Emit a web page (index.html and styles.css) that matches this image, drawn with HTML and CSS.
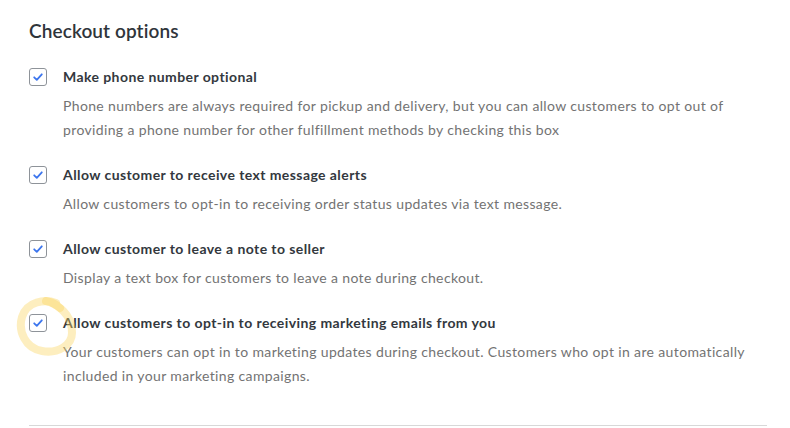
FILE: index.html
```html
<!DOCTYPE html>
<html lang="en">

<head>
    <meta charset="UTF-8">
    <meta name="viewport" content="width=device-width, initial-scale=1.0">
    <title>Checkout options</title>
    <link rel="stylesheet" href="styles.css">
</head>

<body>
    <div class="section">
        <h2 class="title">Checkout options</h2>

        <div class="options">
            <div class="option">
                <span class="checkbox">
                    <svg viewBox="0 0 18 18" width="18" height="18"><path d="M5.2 9.3 L7.8 11.8 L12.8 6.3" /></svg>
                </span>
                <div class="option-body">
                    <div class="option-label">Make phone number optional</div>
                    <p class="option-desc">Phone numbers are always required for pickup and delivery, but you can allow customers to opt out of providing a phone number for other fulfillment methods by checking this box</p>
                </div>
            </div>

            <div class="option">
                <span class="checkbox">
                    <svg viewBox="0 0 18 18" width="18" height="18"><path d="M5.2 9.3 L7.8 11.8 L12.8 6.3" /></svg>
                </span>
                <div class="option-body">
                    <div class="option-label">Allow customer to receive text message alerts</div>
                    <p class="option-desc">Allow customers to opt-in to receiving order status updates via text message.</p>
                </div>
            </div>

            <div class="option">
                <span class="checkbox">
                    <svg viewBox="0 0 18 18" width="18" height="18"><path d="M5.2 9.3 L7.8 11.8 L12.8 6.3" /></svg>
                </span>
                <div class="option-body">
                    <div class="option-label">Allow customer to leave a note to seller</div>
                    <p class="option-desc">Display a text box for customers to leave a note during checkout.</p>
                </div>
            </div>

            <div class="option">
                <span class="checkbox">
                    <svg viewBox="0 0 18 18" width="18" height="18"><path d="M5.2 9.3 L7.8 11.8 L12.8 6.3" /></svg>
                    <!-- hand drawn marker circle -->
                    <svg class="marker" viewBox="0 0 90 80" width="90" height="80">
                        <path d="M56 12 C45 8 27 10 22 26 C18 40 25 57 42 60 C58 63 72 54 72 42 C72 30 66 19 52 12" />
                        <path d="M46 10 C51 11 56 13 60 17" />
                    </svg>
                </span>
                <div class="option-body">
                    <div class="option-label">Allow customers to opt-in to receiving marketing emails from you</div>
                    <p class="option-desc">Your customers can opt in to marketing updates during checkout. Customers who opt in are automatically included in your marketing campaigns.</p>
                </div>
            </div>
        </div>

        <hr class="divider">
    </div>
</body>

</html>
```

FILE: styles.css
```css
body {
    margin: 0px;
    padding: 0px;
    background-color: white;
    font-family: "Lato", "Noto Sans", sans-serif;
    color: #33383e;
}

.section {
    padding: 19px 23px 0px 29px;
}

.title {
    margin: 0px;
    font-size: 19px;
    line-height: 24px;
    font-weight: 600;
    letter-spacing: 0.1px;
    color: #2f353b;
}

.options {
    margin-top: 22px;
    display: flex;
    flex-direction: column;
    gap: 21px;
}

.option {
    display: flex;
    gap: 16px;
}

.checkbox {
    position: relative;
    z-index: 1;
    flex: none;
    width: 16px;
    height: 16px;
    margin-top: 3px;
    border: 1px solid #8e9399;
    border-radius: 3px;
    background-color: white;
}

.checkbox svg {
    display: block;
    margin: -1px;
}

.checkbox path {
    fill: none;
    stroke: #3d76ee;
    stroke-width: 1.8;
    stroke-linecap: round;
    stroke-linejoin: round;
}

/* highlighter ring drawn over the last checkbox */
.checkbox .marker {
    position: absolute;
    left: -30px;
    top: -24px;
    margin: 0px;
    overflow: visible;
    pointer-events: none;
    mix-blend-mode: multiply;
}

.checkbox .marker path {
    stroke: rgba(250, 212, 95, 0.4);
    stroke-width: 8;
}

.option-label {
    font-size: 14px;
    line-height: 24px;
    font-weight: 700;
    letter-spacing: 0.42px;
    color: #33383e;
}

.option-desc {
    margin: 5px 0px 0px 0px;
    font-size: 14px;
    line-height: 24px;
    letter-spacing: 0.36px;
    color: #737373;
}

.divider {
    margin: 37px 0px 0px 0px;
    border: none;
    border-top: 1px solid #d8d8d8;
}
```
